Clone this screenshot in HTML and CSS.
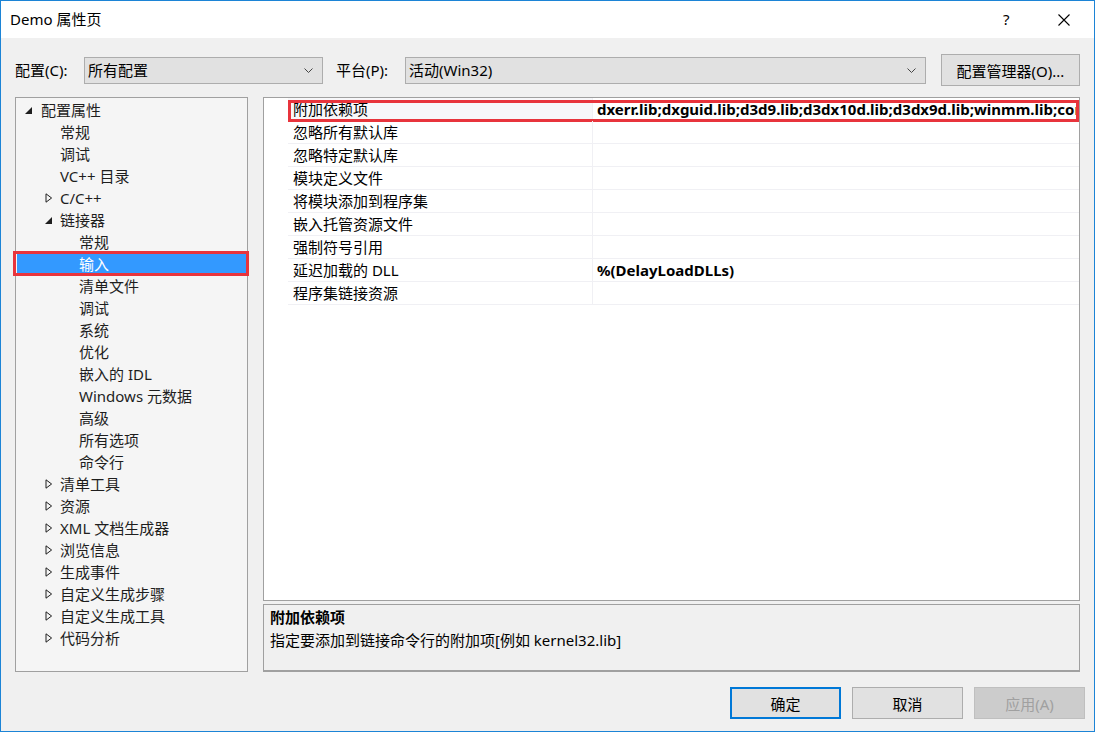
FILE: index.html
```html
<!DOCTYPE html>
<html lang="zh-CN">
<head>
<meta charset="utf-8">
<title>Demo 属性页</title>
<link rel="stylesheet" href="styles.css">
</head>
<body>
<div class="window">
  <div class="titlebar">
    <span class="title">Demo 属性页</span>
    <span class="tb-help">?</span>
    <span class="tb-close"><svg width="12" height="12" viewBox="0 0 12 12"><path d="M0.5 0.5 L11.5 11.5 M11.5 0.5 L0.5 11.5" stroke="#000" stroke-width="1.1" fill="none"/></svg></span>
  </div>
  <div class="body">
    <div class="toolbar">
      <span class="lbl">配置(C):</span>
      <div class="combo combo-config"><span class="combo-text">所有配置</span><svg class="chev" width="9" height="5" viewBox="0 0 9 5"><path d="M0.5 0.5 L4.5 4.5 L8.5 0.5" stroke="#444" stroke-width="1" fill="none"/></svg></div>
      <span class="lbl lbl-platform">平台(P):</span>
      <div class="combo combo-platform"><span class="combo-text">活动(Win32)</span><svg class="chev" width="9" height="5" viewBox="0 0 9 5"><path d="M0.5 0.5 L4.5 4.5 L8.5 0.5" stroke="#444" stroke-width="1" fill="none"/></svg></div>
      <button class="btn btn-manager">配置管理器(O)...</button>
    </div>
    <div class="main">
      <div class="tree">
        <div class="row l0"><span class="exp"><svg width="9" height="9" viewBox="0 0 9 9"><path d="M8 1 L8 8 L1 8 Z" fill="#1e1e1e"/></svg></span><span class="txt">配置属性</span></div>
        <div class="row l1"><span class="exp"></span><span class="txt">常规</span></div>
        <div class="row l1"><span class="exp"></span><span class="txt">调试</span></div>
        <div class="row l1"><span class="exp"></span><span class="txt">VC++ 目录</span></div>
        <div class="row l1"><span class="exp"><svg class="tri-c" width="9" height="10" viewBox="0 0 9 10"><path d="M1 0.8 L6.6 5 L1 9.2 Z" fill="none" stroke="#1e1e1e" stroke-width="1"/></svg></span><span class="txt">C/C++</span></div>
        <div class="row l1"><span class="exp"><svg width="9" height="9" viewBox="0 0 9 9"><path d="M8 1 L8 8 L1 8 Z" fill="#1e1e1e"/></svg></span><span class="txt">链接器</span></div>
        <div class="row l2"><span class="exp"></span><span class="txt">常规</span></div>
        <div class="row l2 selected"><span class="exp"></span><span class="txt">输入</span><span class="mark"></span></div>
        <div class="row l2"><span class="exp"></span><span class="txt">清单文件</span></div>
        <div class="row l2"><span class="exp"></span><span class="txt">调试</span></div>
        <div class="row l2"><span class="exp"></span><span class="txt">系统</span></div>
        <div class="row l2"><span class="exp"></span><span class="txt">优化</span></div>
        <div class="row l2"><span class="exp"></span><span class="txt">嵌入的 IDL</span></div>
        <div class="row l2"><span class="exp"></span><span class="txt">Windows 元数据</span></div>
        <div class="row l2"><span class="exp"></span><span class="txt">高级</span></div>
        <div class="row l2"><span class="exp"></span><span class="txt">所有选项</span></div>
        <div class="row l2"><span class="exp"></span><span class="txt">命令行</span></div>
        <div class="row l1"><span class="exp"><svg class="tri-c" width="9" height="10" viewBox="0 0 9 10"><path d="M1 0.8 L6.6 5 L1 9.2 Z" fill="none" stroke="#1e1e1e" stroke-width="1"/></svg></span><span class="txt">清单工具</span></div>
        <div class="row l1"><span class="exp"><svg class="tri-c" width="9" height="10" viewBox="0 0 9 10"><path d="M1 0.8 L6.6 5 L1 9.2 Z" fill="none" stroke="#1e1e1e" stroke-width="1"/></svg></span><span class="txt">资源</span></div>
        <div class="row l1"><span class="exp"><svg class="tri-c" width="9" height="10" viewBox="0 0 9 10"><path d="M1 0.8 L6.6 5 L1 9.2 Z" fill="none" stroke="#1e1e1e" stroke-width="1"/></svg></span><span class="txt">XML 文档生成器</span></div>
        <div class="row l1"><span class="exp"><svg class="tri-c" width="9" height="10" viewBox="0 0 9 10"><path d="M1 0.8 L6.6 5 L1 9.2 Z" fill="none" stroke="#1e1e1e" stroke-width="1"/></svg></span><span class="txt">浏览信息</span></div>
        <div class="row l1"><span class="exp"><svg class="tri-c" width="9" height="10" viewBox="0 0 9 10"><path d="M1 0.8 L6.6 5 L1 9.2 Z" fill="none" stroke="#1e1e1e" stroke-width="1"/></svg></span><span class="txt">生成事件</span></div>
        <div class="row l1"><span class="exp"><svg class="tri-c" width="9" height="10" viewBox="0 0 9 10"><path d="M1 0.8 L6.6 5 L1 9.2 Z" fill="none" stroke="#1e1e1e" stroke-width="1"/></svg></span><span class="txt">自定义生成步骤</span></div>
        <div class="row l1"><span class="exp"><svg class="tri-c" width="9" height="10" viewBox="0 0 9 10"><path d="M1 0.8 L6.6 5 L1 9.2 Z" fill="none" stroke="#1e1e1e" stroke-width="1"/></svg></span><span class="txt">自定义生成工具</span></div>
        <div class="row l1"><span class="exp"><svg class="tri-c" width="9" height="10" viewBox="0 0 9 10"><path d="M1 0.8 L6.6 5 L1 9.2 Z" fill="none" stroke="#1e1e1e" stroke-width="1"/></svg></span><span class="txt">代码分析</span></div>
      </div>
      <div class="right">
        <div class="grid">
          <div class="prop first"><span class="gutter"></span><span class="pname">附加依赖项</span><span class="pval">dxerr.lib;dxguid.lib;d3d9.lib;d3dx10d.lib;d3dx9d.lib;winmm.lib;comctl32.lib;%(AdditionalDependencies)</span><span class="mark"></span></div>
          <div class="prop"><span class="gutter"></span><span class="pname">忽略所有默认库</span><span class="pval"></span></div>
          <div class="prop"><span class="gutter"></span><span class="pname">忽略特定默认库</span><span class="pval"></span></div>
          <div class="prop"><span class="gutter"></span><span class="pname">模块定义文件</span><span class="pval"></span></div>
          <div class="prop"><span class="gutter"></span><span class="pname">将模块添加到程序集</span><span class="pval"></span></div>
          <div class="prop"><span class="gutter"></span><span class="pname">嵌入托管资源文件</span><span class="pval"></span></div>
          <div class="prop"><span class="gutter"></span><span class="pname">强制符号引用</span><span class="pval"></span></div>
          <div class="prop"><span class="gutter"></span><span class="pname">延迟加载的 DLL</span><span class="pval">%(DelayLoadDLLs)</span></div>
          <div class="prop"><span class="gutter"></span><span class="pname">程序集链接资源</span><span class="pval"></span></div>
        </div>
        <div class="desc">
          <div class="desc-title">附加依赖项</div>
          <div class="desc-text">指定要添加到链接命令行的附加项[例如 kernel32.lib]</div>
        </div>
      </div>
    </div>
    <div class="footer">
      <button class="btn btn-foot btn-default">确定</button>
      <button class="btn btn-foot">取消</button>
      <button class="btn btn-foot btn-disabled">应用(A)</button>
    </div>
  </div>
</div>
</body>
</html>
```
FILE: styles.css
```css
* { box-sizing: border-box; }
html, body { margin: 0; padding: 0; }
body {
  font-family: "Noto Sans", "Noto Sans CJK SC", sans-serif;
  font-size: 15px;
  color: #000;
  background: #f0f0f0;
}
.window {
  width: 1095px;
  height: 732px;
  border: 1px solid #1c84d6;
  background: #f0f0f0;
  display: flex;
  flex-direction: column;
}
.titlebar {
  height: 37px;
  background: #fff;
  display: flex;
  align-items: center;
  padding-left: 9px;
  flex: none;
}
.title { flex: 1; line-height: 20px; padding-bottom: 2px; }
.tb-help { width: 20px; margin-right: 35px; line-height: 20px; padding-bottom: 2px; }
.tb-close { width: 12px; margin-right: 24px; display: flex; }

.body {
  flex: 1;
  padding: 16px 14px 0 14px;
  display: flex;
  flex-direction: column;
}
.toolbar {
  display: flex;
  align-items: center;
  height: 32px;
}
.lbl { width: 69px; line-height: 20px; }
.lbl-platform { margin-left: 13px; }
.combo {
  height: 27px;
  background: #e1e1e1;
  border: 1px solid #adadad;
  display: flex;
  align-items: center;
  padding-left: 3px;
  padding-right: 9px;
}
.combo-text { flex: 1; line-height: 20px; }
.combo-config { width: 239px; }
.combo-platform { width: 521px; }
.chev { display: block; }
.btn {
  font-family: inherit;
  font-size: 15px;
  color: #000;
  background: #e1e1e1;
  border: 1px solid #adadad;
  padding: 0;
  height: 32px;
}
.btn-manager { width: 139px; margin-left: 15px; }

.main {
  display: flex;
  margin-top: 11px;
  height: 575px;
}
.tree {
  width: 233px;
  border: 1px solid #a0a0a0;
  background: #f5f5f5;
  padding-top: 1px;
  position: relative;
}
.row {
  height: 22px;
  display: flex;
  align-items: center;
  line-height: 22px;
  color: #1e1e1e;
  position: relative;
}
.l0 { padding-left: 6px; }
.l1 { padding-left: 25px; }
.l2 { padding-left: 44px; }
.exp {
  width: 19px;
  height: 22px;
  display: flex;
  align-items: center;
  flex: none;
}
.l0 .exp svg { margin-left: 2px; margin-top: 0; }
.l1 .exp svg { margin-left: 3px; }
.l1 .exp .tri-c { margin-left: 4px; }
.row.selected { background: #3399ff; color: #fff; margin: 0 1px; padding-left: 43px; }
.row .mark {
  position: absolute;
  left: -4px;
  right: -3px;
  top: -2px;
  bottom: -1px;
  border: 3px solid #e8343c;
}

.right {
  width: 817px;
  margin-left: 15px;
  display: flex;
  flex-direction: column;
}
.grid {
  height: 504px;
  border: 1px solid #a0a0a0;
  background: #fff;
}
.prop {
  height: 23px;
  display: flex;
  position: relative;
}
.gutter { width: 24px; flex: none; }
.pname {
  width: 305px;
  flex: none;
  padding-left: 5px;
  line-height: 22px;
  border-bottom: 1px solid #f0f0f4;
  border-right: 1px solid #f0f0f4;
  white-space: nowrap;
}
.pval {
  flex: 1;
  min-width: 0;
  padding-left: 4px;
  line-height: 22px;
  font-weight: bold;
  white-space: nowrap;
  overflow: hidden;
  border-bottom: 1px solid #f0f0f4;
}
.prop.first .pname { background: #f7f7f9; }
.prop .mark {
  position: absolute;
  left: 24px;
  right: 0;
  top: 2px;
  bottom: -1px;
  border: 3px solid #e8343c;
}
.desc {
  margin-top: 3px;
  height: 68px;
  border: 1px solid #a0a0a0;
  border-bottom-width: 2px;
  background: #f0f0f0;
  padding: 1px 0 0 6px;
}
.desc-title { font-weight: bold; line-height: 23px; }
.desc-text { line-height: 23px; }

.footer {
  display: flex;
  justify-content: flex-end;
  margin-top: 15px;
  margin-right: -5px;
  gap: 11px;
}
.btn-foot { width: 111px; }
.btn-default { border: 2px solid #0078d7; }
.btn-disabled { background: #cccccc; border-color: #bfbfbf; color: #a0a0a0; }
```
